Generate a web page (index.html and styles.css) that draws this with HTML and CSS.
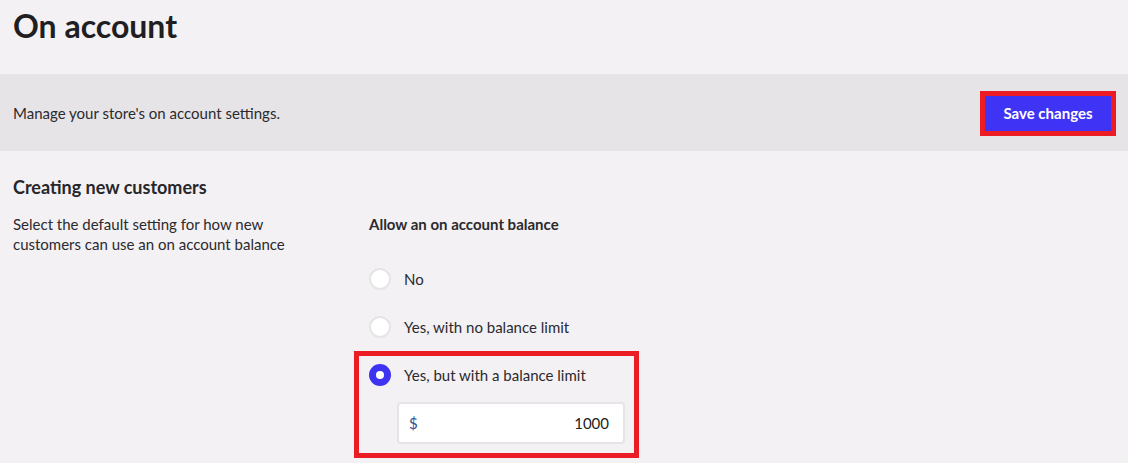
FILE: index.html
```html
<!DOCTYPE html>
<html lang="en">
<head>
<meta charset="utf-8">
<title>On account</title>
<link rel="stylesheet" href="styles.css">
</head>
<body>
<header class="page-header">
  <h1 class="page-title">On account</h1>
</header>
<div class="banner">
  <p class="banner-text">Manage your store's on account settings.</p>
  <button class="btn-primary" type="button">Save changes</button>
</div>
<section class="section">
  <h2 class="section-title">Creating new customers</h2>
  <div class="section-grid">
    <p class="section-desc">Select the default setting for how new customers can use an on account balance</p>
    <div class="field">
      <div class="field-label">Allow an on account balance</div>
      <div class="options">
        <label class="option">
          <span class="radio"></span>
          <span class="option-text">No</span>
        </label>
        <label class="option">
          <span class="radio"></span>
          <span class="option-text">Yes, with no balance limit</span>
        </label>
        <div class="option-box">
          <label class="option">
            <span class="radio radio-checked"></span>
            <span class="option-text">Yes, but with a balance limit</span>
          </label>
          <div class="money-input">
            <span class="currency">$</span>
            <span class="amount">1000</span>
          </div>
        </div>
      </div>
    </div>
  </div>
</section>
</body>
</html>
```
FILE: styles.css
```css
* { box-sizing: border-box; }
body {
  margin: 0;
  background: #f3f1f4;
  font-family: Lato, "Noto Sans", sans-serif;
  color: #2b2a2e;
}
.page-header {
  height: 74px;
  padding: 6px 13px 0;
}
.page-title {
  margin: 0;
  font-size: 32px;
  line-height: 40px;
  font-weight: 700;
  color: #1f1e22;
}
.banner {
  height: 77px;
  background: #e6e4e7;
  display: flex;
  align-items: center;
  justify-content: space-between;
  padding: 1px 12px 0 13px;
}
.banner-text {
  margin: 0;
  font-size: 15px;
  line-height: 20px;
}
.btn-primary {
  width: 136px;
  height: 45px;
  background: #3f33f5;
  color: #fff;
  border: 5px solid #ec1c24;
  font-family: Lato, "Noto Sans", sans-serif;
  font-size: 15px;
  font-weight: 700;
  padding: 0;
  cursor: pointer;
}
.section {
  padding: 24px 13px 0;
}
.section-title {
  margin: 0;
  font-size: 18px;
  line-height: 24px;
  font-weight: 700;
  color: #27262a;
}
.section-grid {
  display: grid;
  grid-template-columns: 356px 1fr;
  margin-top: 15px;
}
.section-desc {
  margin: 0;
  font-size: 15px;
  line-height: 20px;
  width: 285px;
}
.field-label {
  font-size: 15px;
  line-height: 20px;
  font-weight: 700;
}
.options {
  margin-top: 34px;
  display: flex;
  flex-direction: column;
  align-items: flex-start;
}
.option {
  display: flex;
  align-items: center;
  gap: 13px;
  height: 22px;
  font-size: 15px;
  margin-bottom: 26px;
}
.radio {
  width: 22px;
  height: 22px;
  border-radius: 50%;
  background: #fff;
  border: 2px solid #e6e4e7;
  display: flex;
  align-items: center;
  justify-content: center;
  flex-shrink: 0;
}
.radio-checked {
  background: #3f33f2;
  border-color: #3f33f2;
}
.radio-checked::after {
  content: "";
  width: 8px;
  height: 8px;
  border-radius: 50%;
  background: #fff;
}
.option-box {
  margin: -13px 0 0 -15px;
  width: 285px;
  height: 107px;
  border: 5px solid #ec1c24;
  padding: 8px 9px 9px 10px;
}
.option-box .option {
  margin-bottom: 16px;
}
.money-input {
  margin-left: 28px;
  width: 228px;
  height: 42px;
  background: #fff;
  border: 2px solid #e6e4e7;
  border-radius: 4px;
  display: flex;
  align-items: center;
  justify-content: space-between;
  padding: 0 14px 0 10px;
  font-size: 15px;
}
.currency { color: #2f4f96; }
.amount { color: #222; }
```
